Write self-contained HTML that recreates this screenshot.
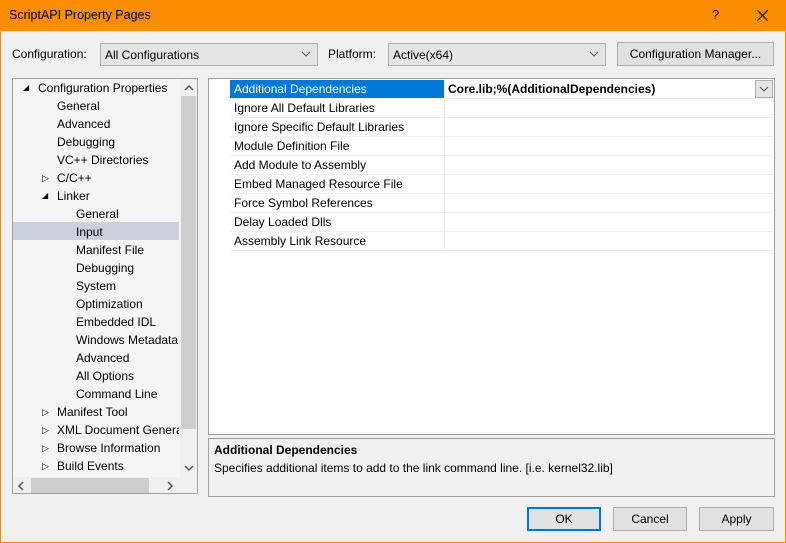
<!DOCTYPE html>
<html><head><style>
*{box-sizing:border-box;margin:0;padding:0}
body{width:786px;height:543px;overflow:hidden;font-family:"Liberation Sans",sans-serif;font-size:12px;color:#000;position:relative;background:#f0f0f0}
.win{position:absolute;left:0;top:0;width:786px;height:543px;border:1px solid #f98b00;background:#f0f0f0}
.title{position:absolute;left:0;top:0;width:786px;height:31px;background:#fc8c00}
.abs{position:absolute;white-space:nowrap}
.combo{position:absolute;border:1px solid #adadad;background:#e5e5e5;height:23px;padding:4px 4px}
.chev{position:absolute;right:6px;top:5px}
.btn{position:absolute;border:1px solid #adadad;background:#e1e1e1;height:24px;text-align:center;line-height:22px}
.tree{position:absolute;left:12px;top:78px;width:186px;height:416px;border:1px solid #a0a0a0;background:#f5f5f5}
.ti{position:absolute;height:18px;line-height:18px;white-space:nowrap}
.grid{position:absolute;left:208px;top:78px;width:567px;height:357px;border:1px solid #a0a0a0;background:#fff}
.row{position:absolute;left:21px;width:543px;height:19px;border-bottom:1px solid #f0f0f0;line-height:19px}
.row .n{position:absolute;left:0;width:215px;padding-left:4px;height:18px;border-right:1px solid #f0f0f0}
.desc{position:absolute;left:208px;top:438px;width:567px;height:59px;border:1px solid #a0a0a0;background:#f0f0f0}
</style></head><body>
<div class="win"></div>
<div class="title"></div>
<div class="abs" style="left:9px;top:8px;font-size:12.5px">ScriptAPI Property Pages</div>
<div class="abs" style="left:712px;top:7px;font-size:13px">?</div>
<svg class="abs" style="left:757px;top:10px" width="11" height="11"><path d="M0 0L11 11M11 0L0 11" stroke="#000" stroke-width="1.2"/></svg>

<div class="abs" style="left:12px;top:47px">Configuration:</div>
<div class="combo" style="left:100px;top:43px;width:218px">All Configurations<svg class="chev" width="10" height="10"><path d="M1 3L5 7L9 3" stroke="#555" fill="none"/></svg></div>
<div class="abs" style="left:328px;top:47px">Platform:</div>
<div class="combo" style="left:388px;top:43px;width:218px">Active(x64)<svg class="chev" width="10" height="10"><path d="M1 3L5 7L9 3" stroke="#555" fill="none"/></svg></div>
<div class="btn" style="left:617px;top:42px;width:157px">Configuration Manager...</div>

<div class="tree">
<div style="position:absolute;left:0;top:143px;width:166px;height:18px;background:#ccd0dc"></div>
<div class="ti" style="left:10px;top:0;font-size:8px">◢</div><div class="ti" style="left:25px;top:0">Configuration Properties</div>
<div class="ti" style="left:44px;top:18px">General</div>
<div class="ti" style="left:44px;top:36px">Advanced</div>
<div class="ti" style="left:44px;top:54px">Debugging</div>
<div class="ti" style="left:44px;top:72px">VC++ Directories</div>
<div class="ti" style="left:29px;top:90px;font-size:9px">▷</div><div class="ti" style="left:44px;top:90px">C/C++</div>
<div class="ti" style="left:29px;top:108px;font-size:8px">◢</div><div class="ti" style="left:44px;top:108px">Linker</div>
<div class="ti" style="left:63px;top:126px">General</div>
<div class="ti" style="left:63px;top:144px">Input</div>
<div class="ti" style="left:63px;top:162px">Manifest File</div>
<div class="ti" style="left:63px;top:180px">Debugging</div>
<div class="ti" style="left:63px;top:198px">System</div>
<div class="ti" style="left:63px;top:216px">Optimization</div>
<div class="ti" style="left:63px;top:234px">Embedded IDL</div>
<div class="ti" style="left:63px;top:252px;width:103px;overflow:hidden">Windows Metadata</div>
<div class="ti" style="left:63px;top:270px">Advanced</div>
<div class="ti" style="left:63px;top:288px">All Options</div>
<div class="ti" style="left:63px;top:306px">Command Line</div>
<div class="ti" style="left:29px;top:324px;font-size:9px">▷</div><div class="ti" style="left:44px;top:324px">Manifest Tool</div>
<div class="ti" style="left:29px;top:342px;font-size:9px">▷</div><div class="ti" style="left:44px;top:342px;width:122px;overflow:hidden">XML Document Generator</div>
<div class="ti" style="left:29px;top:360px;font-size:9px">▷</div><div class="ti" style="left:44px;top:360px">Browse Information</div>
<div class="ti" style="left:29px;top:378px;font-size:9px">▷</div><div class="ti" style="left:44px;top:378px">Build Events</div>
<div style="position:absolute;left:167px;top:0;width:17px;height:398px;background:#f0f0f0"></div>
<div style="position:absolute;left:168px;top:17px;width:15px;height:333px;background:#cdcdcd"></div>
<svg style="position:absolute;left:171px;top:5px" width="10" height="8"><path d="M1 6L5 2L9 6" stroke="#555" stroke-width="1.5" fill="none"/></svg>
<svg style="position:absolute;left:171px;top:385px" width="10" height="8"><path d="M1 2L5 6L9 2" stroke="#555" stroke-width="1.5" fill="none"/></svg>
<div style="position:absolute;left:0;top:398px;width:184px;height:16px;background:#f0f0f0"></div>
<div style="position:absolute;left:18px;top:399px;width:118px;height:15px;background:#cdcdcd"></div>
<svg style="position:absolute;left:4px;top:402px" width="8" height="10"><path d="M6 1L2 5L6 9" stroke="#555" stroke-width="1.5" fill="none"/></svg>
<svg style="position:absolute;left:153px;top:402px" width="8" height="10"><path d="M2 1L6 5L2 9" stroke="#555" stroke-width="1.5" fill="none"/></svg>
</div>

<div class="grid">
<div class="row" style="top:1px"><div class="n" style="background:#0078d7;color:#fff">Additional Dependencies</div><div class="abs" style="left:218px;top:0;font-weight:bold">Core.lib;%(AdditionalDependencies)</div>
<div style="position:absolute;right:0;top:0;width:18px;height:18px;border:1px solid #adadad;background:#e5e5e5"><svg style="position:absolute;left:3px;top:4px" width="10" height="8"><path d="M1 2L5 6L9 2" stroke="#555" fill="none"/></svg></div></div>
<div class="row" style="top:20px"><div class="n">Ignore All Default Libraries</div></div>
<div class="row" style="top:39px"><div class="n">Ignore Specific Default Libraries</div></div>
<div class="row" style="top:58px"><div class="n">Module Definition File</div></div>
<div class="row" style="top:77px"><div class="n">Add Module to Assembly</div></div>
<div class="row" style="top:96px"><div class="n">Embed Managed Resource File</div></div>
<div class="row" style="top:115px"><div class="n">Force Symbol References</div></div>
<div class="row" style="top:134px"><div class="n">Delay Loaded Dlls</div></div>
<div class="row" style="top:153px"><div class="n">Assembly Link Resource</div></div>
</div>

<div class="desc">
<div class="abs" style="left:5px;top:4px;font-weight:bold">Additional Dependencies</div>
<div class="abs" style="left:5px;top:22px">Specifies additional items to add to the link command line. [i.e. kernel32.lib]</div>
</div>

<div class="btn" style="left:527px;top:507px;width:74px;border:2px solid #0078d7;line-height:20px">OK</div>
<div class="btn" style="left:613px;top:507px;width:74px">Cancel</div>
<div class="btn" style="left:699px;top:507px;width:75px">Apply</div>
</body></html>
